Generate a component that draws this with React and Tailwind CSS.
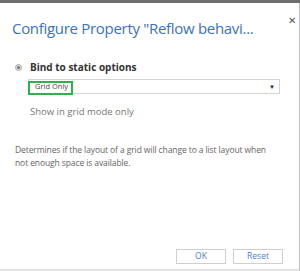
import React from 'react';

const font = { fontFamily: '"Open Sans", "Noto Sans", sans-serif' };

export default function App() {
  return (
    <div className="w-[300px] h-[271px] bg-white flex flex-col overflow-hidden" style={font}>
      {/* top frame band */}
      <div className="h-[3px] bg-[#6e6e6e] shrink-0" />
      <div className="flex-1 flex flex-col border-r border-[#bdbdbd] border-b-2 border-b-[#e3e3e3] relative">
        <button className="absolute right-[3px] top-[12px] text-[#555] text-[10px] leading-none">✕</button>

        <h1 className="pl-[12px] pt-[15px] text-[15px] leading-[20px] text-[#3a72bf] tracking-[-0.3px] whitespace-nowrap">
          Configure Property "Reflow behavi...
        </h1>

        <div className="mt-[23px] pl-[15px] flex items-center gap-[8px]">
          <span className="w-[7px] h-[7px] rounded-full border border-[#aaa] bg-[#ddd] flex items-center justify-center">
            <span className="w-[3px] h-[3px] rounded-full bg-[#777]" />
          </span>
          <span className="text-[10px] font-bold text-[#333] leading-[12px]">Bind to static options</span>
        </div>

        <div className="mt-[6px] ml-[28px] mr-[19px] h-[15px] border border-[#d4d4d4] flex items-center justify-between relative">
          <div className="absolute left-[-1px] top-[1px] w-[45px] h-[14px] border-2 border-[#2cb34a]" />
          <span className="pl-[6px] text-[7.5px] text-[#444] leading-none">Grid Only</span>
          <span className="pr-[4px] text-[6px] text-[#222] leading-none">▼</span>
        </div>

        <div className="mt-[12px] pl-[30px] text-[9.5px] text-[#777] leading-[12px]">Show in grid mode only</div>

        <p className="mt-[25px] pl-[15px] pr-[30px] text-[8.5px] text-[#666] leading-[13px] tracking-[-0.1px]">
          Determines if the layout of a grid will change to a list layout when not enough space is available.
        </p>

        <div className="mt-auto mb-[5px] mr-[16px] flex justify-end gap-[7px]">
          <button className="w-[50px] h-[15px] border border-[#cfcfcf] text-[8.5px] text-[#4f80c4] leading-none">OK</button>
          <button className="w-[50px] h-[15px] border border-[#cfcfcf] text-[8.5px] text-[#4f80c4] leading-none">Reset</button>
        </div>
      </div>
    </div>
  );
}
